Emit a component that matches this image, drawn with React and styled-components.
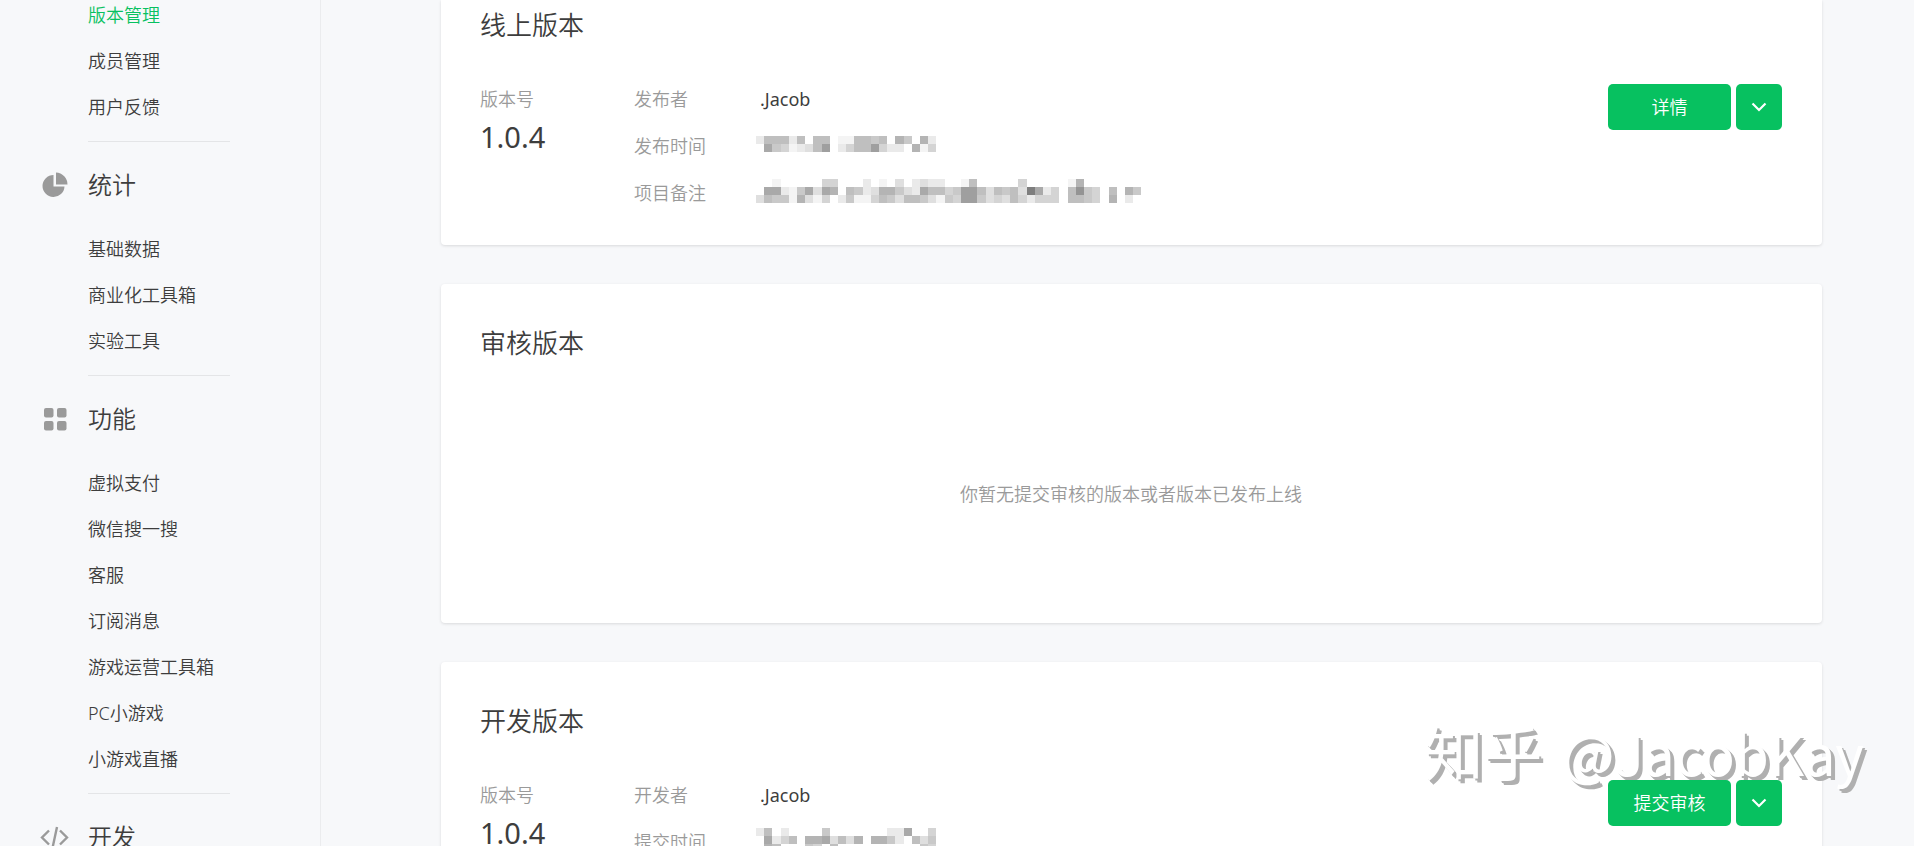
import React from 'react';
import styled, { createGlobalStyle } from 'styled-components';

const GlobalStyle = createGlobalStyle`
  * {
    box-sizing: border-box;
  }

  body {
    margin: 0;
    background-color: #f7f8fa;
    color: #3d3d3d;
    font-family: 'Noto Sans', 'Noto Sans CJK SC', sans-serif;
    font-size: 18px;
    font-weight: 350;
    line-height: 24px;
  }
`;

const Page = styled.div`
  display: flex;
  height: 100vh;
  overflow: hidden;
`;

const Sidebar = styled.nav`
  flex: 0 0 321px;
  padding: 3px 0 0 88px;
  border-right: 1px solid #ebecee;
`;

const MenuList = styled.ul`
  display: flex;
  flex-direction: column;
  gap: 22px;
  width: 142px;
  margin: 0;
  padding: 0 0 22px;
  border-bottom: 1px solid #e4e5e7;
  list-style: none;
`;

const MenuLink = styled.a`
  display: block;
  color: ${(props) => (props.$active ? '#07c160' : '#3d3d3d')};
  text-decoration: none;
  white-space: nowrap;
`;

const MenuHeading = styled.h3`
  display: flex;
  align-items: center;
  gap: 18px;
  margin: 27px 0 36px -48px;
  font-size: 24px;
  font-weight: 350;
  line-height: 32px;

  svg {
    width: 30px;
    height: 30px;
  }
`;

const Content = styled.main`
  flex: 1;
  display: flex;
  flex-direction: column;
  gap: 39px;
  min-width: 0;
  padding: 0 92px 0 120px;
`;

const Card = styled.section`
  flex-shrink: 0;
  padding: ${(props) => (props.$continued ? '8px' : '42px')} 40px 40px 39px;
  background-color: #fff;
  border-radius: ${(props) => (props.$continued ? '0 0 4px 4px' : '4px')};
  box-shadow: 0 1px 3px rgba(0, 0, 0, 0.12);
`;

const CardTitle = styled.h2`
  margin: 0;
  font-size: 26px;
  font-weight: 350;
  line-height: 34px;
`;

const CardBody = styled.div`
  display: flex;
  align-items: flex-start;
  margin-top: 42px;
`;

const Version = styled.div`
  width: 154px;
  padding-top: 3px;
`;

const Label = styled.div`
  color: #9a9a9a;
`;

const VersionNumber = styled.div`
  margin-top: 6px;
  font-size: 29px;
  font-weight: 400;
  line-height: 40px;
`;

const Details = styled.dl`
  flex: 1;
  display: grid;
  grid-template-columns: 122px 1fr;
  row-gap: 23px;
  margin: 0;
  padding-top: 3px;

  dt {
    color: #9a9a9a;
  }

  dd {
    display: flex;
    align-items: center;
    height: 24px;
    margin: 0;
  }
`;

const Publisher = styled.span`
  padding-left: 4px;
  font-weight: 400;
`;

const MosaicSvg = styled.svg`
  flex-shrink: 0;
  margin-bottom: 4px;
`;

const Actions = styled.div`
  position: relative;
  z-index: 2;
  display: flex;
  gap: 5px;
`;

const Button = styled.button`
  display: flex;
  align-items: center;
  justify-content: center;
  width: ${(props) => (props.$icon ? '46px' : '123px')};
  height: 46px;
  padding: 0;
  border: none;
  border-radius: 5px;
  background-color: #07c160;
  color: #fff;
  font: inherit;
  cursor: pointer;
`;

const EmptyMessage = styled.p`
  margin: 122px 0 77px;
  color: #9a9a9a;
  text-align: center;
`;

const Watermark = styled.div`
  position: absolute;
  right: 50px;
  bottom: 54px;
  z-index: 1;
  display: flex;
  align-items: baseline;
  gap: 20px;
  color: #fff;
  font-family: 'Noto Sans CJK SC', sans-serif;
  font-size: 55px;
  font-weight: 400;
  line-height: 80px;
  text-shadow: 2px 2px 0 #b0b0b0, 4px 4px 0 #b0b0b0;
  white-space: nowrap;
  pointer-events: none;
`;

const WatermarkSite = styled.span`
  font-size: 59px;
`;

const PieIcon = () => (
  <svg viewBox="0 0 30 30" fill="#9a9a9a" aria-hidden="true">
    <path d="M13.5 5A11 11 0 1 0 24.5 16.5H13.5Z" />
    <path d="M16 2.5A12 12 0 0 1 27.5 14.5H16Z" />
  </svg>
);

const GridIcon = () => (
  <svg viewBox="0 0 30 30" fill="#9a9a9a" aria-hidden="true">
    <rect x="4" y="4" width="9.5" height="9.5" rx="2" />
    <rect x="17" y="4" width="9.5" height="9.5" rx="2" />
    <rect x="4" y="17" width="9.5" height="9.5" rx="2" />
    <rect x="17" y="17" width="9.5" height="9.5" rx="2" />
  </svg>
);

const CodeIcon = () => (
  <svg viewBox="0 0 30 30" fill="none" stroke="#9a9a9a" strokeWidth="2.4" aria-hidden="true">
    <path d="M9 8.5L2 15.5L9 22.5M20 8.5L27 15.5L20 22.5M17 5L12.5 26" />
  </svg>
);

const ChevronIcon = () => (
  <svg width="16" height="10" viewBox="0 0 16 10" fill="none" stroke="#fff" strokeWidth="2.2" aria-hidden="true">
    <path d="M1.5 1.5L8 8L14.5 1.5" />
  </svg>
);

// One character per cell, 0 is white and f is the darkest grey
const PUBLISH_TIME = ['2666260660116656075072', '0854123690246694220714'];
const PUBLISH_NOTE = [
  '00100000440002010302322001600000400000170000000',
  '088215838706523775328664599636563c82406a5406075',
  '36551731402511465366531549953436424440665407020',
];
const SUBMIT_TIME = ['2602000050000000228004', '0824607783637077520635', '0760005406000000000054'];

const Mosaic = ({ rows }) => (
  <MosaicSvg width={rows[0].length * 8.2} height={rows.length * 8} aria-hidden="true" shapeRendering="crispEdges">
    {rows.map((row, y) =>
      [...row].map((cell, x) => (
        <rect key={`${x}-${y}`} x={x * 8.2} y={y * 8} width="8.2" height="8" fill="#000" fillOpacity={parseInt(cell, 16) * 0.042} />
      ))
    )}
  </MosaicSvg>
);

const MenuItems = ({ items, active }) => (
  <MenuList>
    {items.map((item) => (
      <li key={item}>
        <MenuLink href="#" $active={item === active}>{item}</MenuLink>
      </li>
    ))}
  </MenuList>
);

const VersionInfo = ({ details, action }) => (
  <CardBody>
    <Version>
      <Label>版本号</Label>
      <VersionNumber>1.0.4</VersionNumber>
    </Version>
    <Details>
      {details.map(({ label, value, mosaic }) => (
        <React.Fragment key={label}>
          <dt>{label}</dt>
          <dd>{mosaic ? <Mosaic rows={mosaic} /> : <Publisher>{value}</Publisher>}</dd>
        </React.Fragment>
      ))}
    </Details>
    <Actions>
      <Button type="button">{action}</Button>
      <Button type="button" $icon aria-label="更多">
        <ChevronIcon />
      </Button>
    </Actions>
  </CardBody>
);

const App = () => {
  return (
    <Page>
      <GlobalStyle />
      <Sidebar>
        <MenuItems items={['版本管理', '成员管理', '用户反馈']} active="版本管理" />
        <MenuHeading><PieIcon />统计</MenuHeading>
        <MenuItems items={['基础数据', '商业化工具箱', '实验工具']} />
        <MenuHeading><GridIcon />功能</MenuHeading>
        <MenuItems items={['虚拟支付', '微信搜一搜', '客服', '订阅消息', '游戏运营工具箱', 'PC小游戏', '小游戏直播']} />
        <MenuHeading><CodeIcon />开发</MenuHeading>
      </Sidebar>
      <Content>
        <Card $continued>
          <CardTitle>线上版本</CardTitle>
          <VersionInfo
            action="详情"
            details={[
              { label: '发布者', value: '.Jacob' },
              { label: '发布时间', mosaic: PUBLISH_TIME },
              { label: '项目备注', mosaic: PUBLISH_NOTE },
            ]}
          />
        </Card>
        <Card>
          <CardTitle>审核版本</CardTitle>
          <EmptyMessage>你暂无提交审核的版本或者版本已发布上线</EmptyMessage>
        </Card>
        <Card>
          <CardTitle>开发版本</CardTitle>
          <VersionInfo
            action="提交审核"
            details={[
              { label: '开发者', value: '.Jacob' },
              { label: '提交时间', mosaic: SUBMIT_TIME },
            ]}
          />
        </Card>
      </Content>
      <Watermark>
        <WatermarkSite>知乎</WatermarkSite>
        <span>@JacobKay</span>
      </Watermark>
    </Page>
  );
};

export default App;
